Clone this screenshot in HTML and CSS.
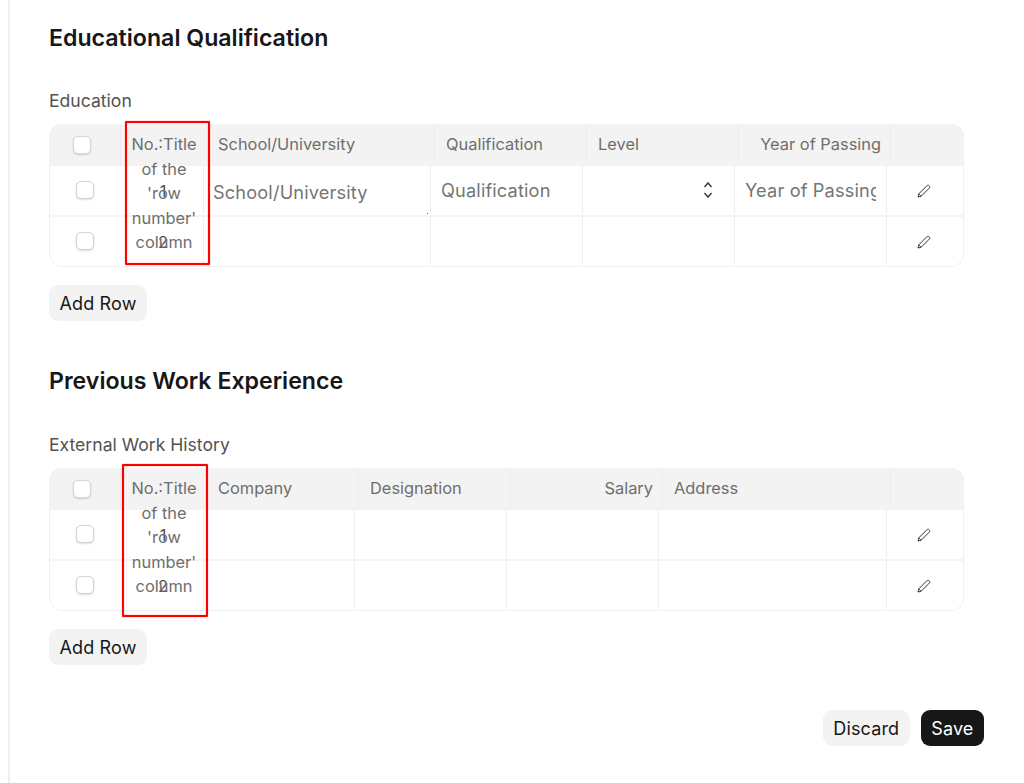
FILE: index.html
```html
<!DOCTYPE html>
<html lang="en">
<head>
    <meta charset="UTF-8">
    <meta name="viewport" content="width=device-width, initial-scale=1.0">
    <title>Employee - Qualifications</title>
    <link rel="stylesheet" href="styles.css">
</head>
<body>
    <svg class="icon-defs" width="0" height="0">
        <symbol id="icon-edit" viewBox="0 0 14 14">
            <path d="M1 13 1.800 9.800 9.800 1.800C10.500 1.100 11.400 1.100 12.100 1.800 12.900 2.600 12.900 3.500 12.200 4.200L4.200 12.200Z" fill="none" stroke="currentColor" stroke-width="1" stroke-linejoin="round"/>
            <path d="M1.800 9.800 4.200 12.200" fill="none" stroke="currentColor" stroke-width="0.800"/>
        </symbol>
    </svg>

    <div class="form-page">
        <!-- Educational Qualification -->
        <section class="form-section section-education">
            <h2>Educational Qualification</h2>
            <div class="field-label">Education</div>
            <div class="grid-wrap">
                <div class="grid">
                    <div class="grid-head cols-head-edu">
                        <div class="cell cell-check"><span class="check"></span></div>
                        <div class="cell cell-no">No.:Title of the 'row number' column</div>
                        <div class="cell">School/University</div>
                        <div class="cell">Qualification</div>
                        <div class="cell">Level</div>
                        <div class="cell cell-right cell-clip">Year of Passing</div>
                        <div class="cell"></div>
                    </div>
                    <div class="grid-row cols-body-edu">
                        <div class="cell cell-check"><span class="check"></span></div>
                        <div class="cell cell-num">1</div>
                        <div class="cell cell-input cell-input-school">School/University<i class="speck"></i></div>
                        <div class="cell cell-input">Qualification</div>
                        <div class="cell cell-select">
                            <svg class="updown" width="10" height="18" viewBox="0 0 10 18"><path d="M1.500 6 5 2 8.500 6M1.500 12 5 16 8.500 12" fill="none" stroke="currentColor" stroke-width="1.500"/></svg>
                        </div>
                        <div class="cell cell-input"><span class="clip">Year of Passing</span></div>
                        <div class="cell cell-edit"><svg class="pencil" width="14" height="14"><use href="#icon-edit"/></svg></div>
                    </div>
                    <div class="grid-row cols-body-edu">
                        <div class="cell cell-check"><span class="check"></span></div>
                        <div class="cell cell-num">2</div>
                        <div class="cell"></div>
                        <div class="cell"></div>
                        <div class="cell"></div>
                        <div class="cell"></div>
                        <div class="cell cell-edit"><svg class="pencil" width="14" height="14"><use href="#icon-edit"/></svg></div>
                    </div>
                </div>
                <div class="mark mark-edu"></div>
            </div>
            <button class="btn btn-add">Add Row</button>
        </section>

        <!-- Previous Work Experience -->
        <section class="form-section section-work">
            <h2>Previous Work Experience</h2>
            <div class="field-label">External Work History</div>
            <div class="grid-wrap">
                <div class="grid">
                    <div class="grid-head cols-head-work">
                        <div class="cell cell-check"><span class="check"></span></div>
                        <div class="cell cell-no">No.:Title of the 'row number' column</div>
                        <div class="cell">Company</div>
                        <div class="cell">Designation</div>
                        <div class="cell cell-right">Salary</div>
                        <div class="cell">Address</div>
                        <div class="cell"></div>
                    </div>
                    <div class="grid-row cols-body-work">
                        <div class="cell cell-check"><span class="check"></span></div>
                        <div class="cell cell-num">1</div>
                        <div class="cell"></div>
                        <div class="cell"></div>
                        <div class="cell"></div>
                        <div class="cell"></div>
                        <div class="cell cell-edit"><svg class="pencil" width="14" height="14"><use href="#icon-edit"/></svg></div>
                    </div>
                    <div class="grid-row cols-body-work">
                        <div class="cell cell-check"><span class="check"></span></div>
                        <div class="cell cell-num">2</div>
                        <div class="cell"></div>
                        <div class="cell"></div>
                        <div class="cell"></div>
                        <div class="cell"></div>
                        <div class="cell cell-edit"><svg class="pencil" width="14" height="14"><use href="#icon-edit"/></svg></div>
                    </div>
                </div>
                <div class="mark mark-work"></div>
            </div>
            <button class="btn btn-add">Add Row</button>
        </section>

        <div class="form-actions">
            <button class="btn">Discard</button>
            <button class="btn btn-primary">Save</button>
        </div>
    </div>
</body>
</html>
```

FILE: styles.css
```css
html, body {
    margin: 0;
    height: 783px;
    overflow: hidden;
    background: #fff;
}
body {
    font-family: Inter, "Liberation Sans", sans-serif;
    color: #171717;
}
.icon-defs {
    position: absolute;
}
.form-page {
    margin-left: 8px;
    height: 783px;
    box-sizing: border-box;
    border-left: 2px solid #efefef;
    padding: 0 40px 0 39px;
}
.form-section h2 {
    margin: 0;
    font-size: 23.150px;
    line-height: 28px;
    font-weight: 600;
    color: #171717;
}
.section-education {
    padding-top: 24px;
}
.section-work {
    padding-top: 46px;
}
.field-label {
    margin-top: 40px;
    font-size: 17.600px;
    line-height: 20px;
    color: #525252;
}
.section-education .field-label {
    margin-top: 39px;
}
.grid-wrap {
    position: relative;
    margin-top: 13px;
    width: 915px;
}
.grid {
    border: 1px solid #f0f0f0;
    border-radius: 13px;
    box-sizing: border-box;
    height: 143px;
}
.grid-head {
    display: grid;
    height: 42px;
    margin: -1px -1px 0;
    background: #f3f3f3;
    border-radius: 13px 13px 0 0;
    color: #6e6e6e;
    font-size: 16.400px;
}
.grid-head .cell {
    height: 42px;
    line-height: 41px;
    padding: 0 10px 0 11px;
    border-right: 1px solid #ececec;
    white-space: nowrap;
}
.grid-head .cell:last-child {
    border-right: 0;
}
.cols-head-edu {
    grid-template-columns: 72px 86px 228px 152px 152px 152px 73px;
}
.cols-head-work {
    grid-template-columns: 72px 86px 152px 152px 152px 228px 73px;
}
.cols-body-edu {
    grid-template-columns: 76px 78px 227px 152px 152px 152px 1fr;
}
.cols-body-work {
    grid-template-columns: 76px 78px 151px 152px 152px 228px 1fr;
}
.cell {
    box-sizing: border-box;
    min-width: 0;
}
.grid-head .cell-no {
    position: relative;
    overflow: visible;
    white-space: normal;
    text-align: center;
    line-height: 24.600px;
    padding: 8px 2px 0 2px;
    border-right: 0;
    z-index: 2;
}
.grid-head .cell-check {
    display: flex;
    align-items: center;
    justify-content: center;
    padding: 0 6px 0 0;
}
.grid-head .cell-right {
    text-align: right;
    padding-right: 9px;
}
.grid-head .cell-clip {
    overflow: hidden;
}
.grid-row {
    display: grid;
    height: 52px;
    border-top: 2px solid #f4f4f4;
    box-sizing: border-box;
    color: #757575;
    font-size: 18.200px;
}
.grid-head + .grid-row {
    height: 49px;
    border-top: 0;
}
.grid-row .cell {
    height: 48px;
    border-right: 1px solid #ededed;
}
.grid-row .cell:last-child {
    border-right: 0;
}
.grid-row .cell-check {
    display: flex;
    align-items: center;
    justify-content: center;
    border-right: 0;
    padding-right: 6px;
}
.check {
    display: block;
    width: 18px;
    height: 18px;
    box-sizing: border-box;
    background: #fff;
    border: 1px solid #d4d4d4;
    border-radius: 5px;
    box-shadow: 0 1px 2px rgba(0, 0, 0, 0.15);
}
.cell-num {
    padding: 13px 4px 0 0;
    border-left: 1px solid #f0f0f0;
    text-align: center;
    font-size: 16.400px;
    line-height: 24px;
    color: #525252;
}
.cell-input {
    position: relative;
    padding: 0 10px;
    line-height: 49px;
    letter-spacing: 0.150px;
    white-space: nowrap;
}
.cell-input-school {
    padding-left: 9px;
    line-height: 52px;
}
.clip {
    display: block;
    overflow: hidden;
}
.speck {
    position: absolute;
    right: 2px;
    bottom: 0;
    width: 1px;
    height: 1px;
    background: #555;
}
.cell-select {
    display: flex;
    align-items: center;
    justify-content: flex-end;
    padding-right: 21px;
}
.updown {
    color: #404040;
}
.cell-edit {
    display: flex;
    align-items: center;
    justify-content: center;
    padding: 2px 2px 0 0;
}
.pencil {
    color: #333;
}
.mark {
    position: absolute;
    box-sizing: border-box;
    border: 2px solid #f00;
    border-radius: 1px;
    box-shadow: 0 0 1px rgba(255, 0, 0, 0.9), inset 0 0 1px rgba(255, 0, 0, 0.9);
}
.mark-edu {
    left: 76px;
    top: -3px;
    width: 85px;
    height: 144px;
}
.mark-work {
    left: 73px;
    top: -4px;
    width: 86px;
    height: 153px;
}
.btn {
    display: block;
    height: 36px;
    padding: 0 10.500px;
    border: 0;
    border-radius: 9px;
    background: #f3f3f3;
    color: #171717;
    font-family: inherit;
    font-size: 18px;
    letter-spacing: 0.150px;
    white-space: nowrap;
}
.btn-add {
    margin-top: 18px;
    padding: 0;
    width: 98px;
}
.form-actions {
    display: flex;
    justify-content: flex-end;
    gap: 11px;
    width: 935px;
    margin-top: 45px;
}
.btn-primary {
    background: #171717;
    color: #fff;
}
```
